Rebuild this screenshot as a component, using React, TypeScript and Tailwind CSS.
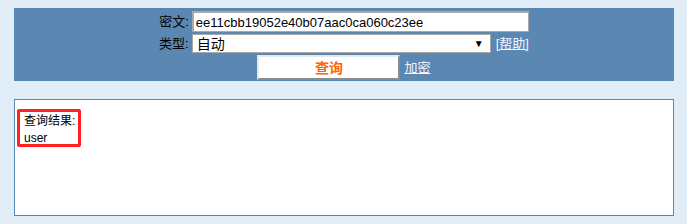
import React from "react";

const font = { fontFamily: '"Liberation Sans", Arial, "Noto Sans CJK SC", sans-serif' };

export default function App() {
  return (
    <div className="w-[687px] h-[224px] bg-[#e1eef7] pt-[8px] px-[14px] text-black" style={font}>
      <div className="w-[660px] h-[73px] bg-[#5b87b3] pt-[3px] flex flex-col items-center">
        <div className="flex items-center h-[21px] text-[13px]">
          <span className="mr-[3px]">密文:</span>
          <div className="w-[337px] h-[21px] bg-white border border-[#a9a9a9] border-t-[2px] border-l-[2px] flex items-center pl-[2px] text-[13px] leading-none">
            ee11cbb19052e40b07aac0ca060c23ee
          </div>
        </div>
        <div className="flex items-center h-[21px] mt-[1px] text-[13px]">
          <span className="mr-[3px]">类型:</span>
          <div className="w-[299px] h-[19px] bg-white border border-[#a9a9a9] flex items-center justify-between pl-[4px] pr-[6px] leading-none">
            <span className="text-[14px]">自动</span>
            <span className="text-[10px]">▼</span>
          </div>
          <span className="ml-[5px] text-[#f0f6ff] underline">[帮助]</span>
        </div>
        <div className="flex items-center mt-[1px] text-[13px]">
          <div className="w-[143px] h-[25px] bg-white border-[2px] border-t-[#e8e8e8] border-l-[#e8e8e8] border-b-[#8c8c8c] border-r-[#8c8c8c] flex items-center justify-center text-[#ff6600] text-[14px] font-bold leading-none">
            查询
          </div>
          <span className="ml-[4px] text-[#f0f6ff] underline">加密</span>
        </div>
      </div>
      <div className="mt-[18px] w-[660px] h-[117px] bg-white border border-[#5b87b3] pt-[9px] pl-[2px]">
        <div className="w-[64px] h-[38px] border-[3px] border-[#ff2020] rounded-[2px] pl-[4px] pt-[1px] text-[12px] leading-[17px]">
          <div>查询结果:</div>
          <div>user</div>
        </div>
      </div>
    </div>
  );
}
